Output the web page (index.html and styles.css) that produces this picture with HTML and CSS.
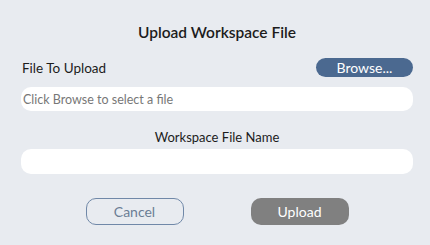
FILE: index.html
```html
<!DOCTYPE html>
<html lang="en">
  <head>
    <meta charset="UTF-8" />
    <meta name="viewport" content="width=device-width, initial-scale=1.0" />
    <title>Upload Workspace File</title>
    <link rel="stylesheet" href="styles.css">
  </head>
  <body>
    <div class="dialog">
      <h1 class="dialog-title">Upload Workspace File</h1>

      <div class="file-row">
        <label for="file-path">File To Upload</label>
        <button class="browse-btn" type="button">Browse...</button>
      </div>
      <input
        type="text"
        id="file-path"
        class="text-field"
        placeholder="Click Browse to select a file"
        readonly
      />

      <label for="file-name" class="center-label">Workspace File Name</label>
      <input type="text" id="file-name" class="text-field name-field" />

      <div class="actions">
        <button class="cancel-btn" type="button">Cancel</button>
        <button class="upload-btn" type="button" disabled>Upload</button>
      </div>
    </div>
  </body>
</html>
```

FILE: styles.css
```css
body {
  margin: 0;
  background-color: #e8ebf0;
  font-family: Lato, "Noto Sans", sans-serif;
  color: #1c1c1c;
}
.dialog {
  padding: 0 17px 0 21px;
}
.dialog-title {
  margin: 22px 0 0;
  font-size: 15.5px;
  font-weight: 600;
  line-height: 20px;
  text-align: center;
}
.file-row {
  display: flex;
  align-items: center;
  justify-content: space-between;
  height: 19px;
  margin-top: 16px;
  padding-left: 1px;
}
.file-row label {
  font-size: 13.5px;
}
.browse-btn {
  width: 97px;
  height: 19px;
  padding: 0;
  border: none;
  border-radius: 10px;
  background-color: #4b6990;
  color: #ffffff;
  font-family: inherit;
  font-size: 14px;
  line-height: 19px;
}
.text-field {
  display: block;
  box-sizing: border-box;
  width: 100%;
  height: 24px;
  margin-top: 10px;
  padding: 0 2px;
  border: none;
  border-radius: 10px;
  background-color: #ffffff;
  font-family: inherit;
  font-size: 12.5px;
  outline: none;
}
.text-field::placeholder {
  color: #777777;
}
.center-label {
  display: block;
  margin-top: 16px;
  font-size: 13px;
  line-height: 20px;
  text-align: center;
}
.name-field {
  height: 25px;
  margin-top: 2px;
}
.actions {
  display: flex;
  justify-content: center;
  gap: 67px;
  margin-top: 24px;
}
.actions button {
  width: 98px;
  height: 27px;
  border-radius: 10px;
  font-family: inherit;
  font-size: 14px;
}
.cancel-btn {
  border: 1px solid #7088a8;
  background-color: transparent;
  color: #6b7d95;
}
.upload-btn {
  border: none;
  background-color: #808080;
  color: #ffffff;
}
```
